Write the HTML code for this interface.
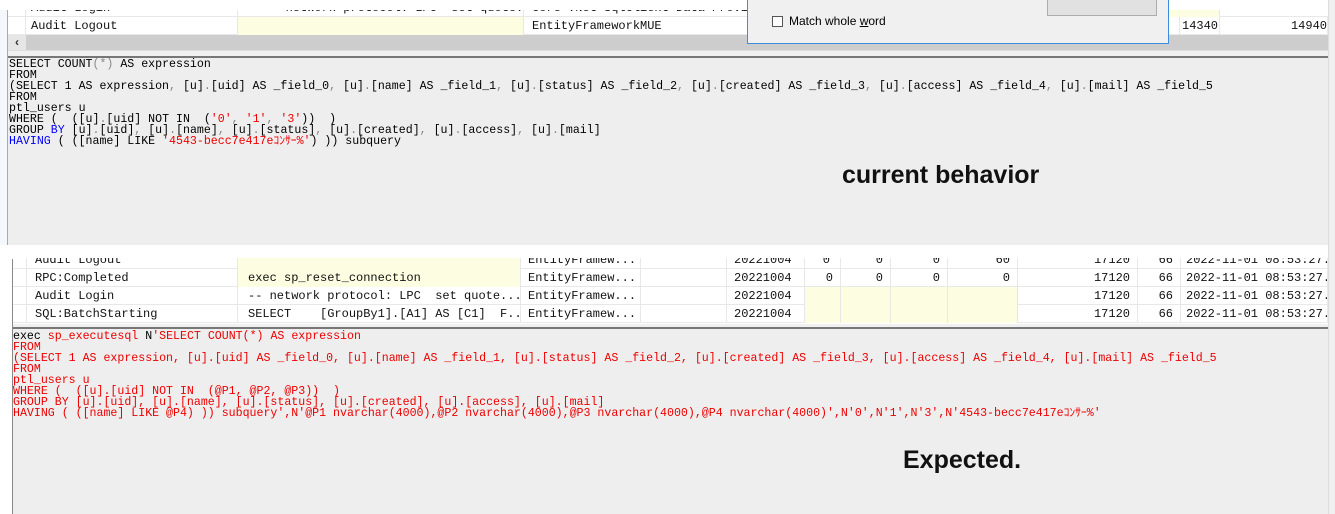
<!DOCTYPE html>
<html><head><meta charset="utf-8"><style>
*{margin:0;padding:0;box-sizing:border-box}
body{width:1335px;height:514px;overflow:hidden;background:#fff;position:relative;font-family:"Liberation Mono","Noto Sans CJK JP",monospace}
.a{position:absolute}
.mono{font-family:"Liberation Mono","Noto Sans CJK JP",monospace;font-size:11.6px;line-height:11px;white-space:pre}
.row{position:absolute;height:18px;border-bottom:1px solid #e8e8e8;font-size:12px;line-height:18px;white-space:pre;color:#111}
.cell{position:absolute;top:0;height:18px;border-right:1px solid #e8e8e8;overflow:hidden}
.y{background:#fdfde2}
.k{color:#00f}.r{color:#e00}.g{color:#888}
.big{font-family:"Liberation Sans",sans-serif;font-weight:bold;font-size:25px;color:#111}
</style></head><body>
<!-- top panel -->
<div class="a" style="left:0;top:10px;width:8px;height:236px;background:#f4f7fb"></div>
<div class="a" style="left:7px;top:10px;width:1px;height:236px;background:#aaa"></div>
<div class="row" style="left:8px;top:-1px;width:1320px;height:18px"><div class="cell" style="left:0;width:18px"></div><div class="cell" style="left:18px;width:212px;padding-left:5px">Audit Login</div><div class="cell" style="left:230px;width:286px;padding-left:26px">-- network protocol: LPC  set quote...</div><div class="cell" style="left:516px;width:400px;padding-left:8px">Core .Net SqlClient Data Provider</div><div class="cell y" style="left:1160px;width:52px"></div></div>
<div class="a" style="left:0;top:0;width:1335px;height:10px;background:#fff"></div>
<div class="row" style="left:8px;top:17px;width:1320px"><div class="cell" style="left:0;width:18px"></div><div class="cell" style="left:18px;width:212px;padding-left:5px">Audit Logout</div><div class="cell y" style="left:230px;width:286px"></div><div class="cell" style="left:516px;width:656px;padding-left:8px">EntityFrameworkMUE</div><div class="cell" style="left:1172px;width:40px;padding-left:2px">14340</div><div class="cell" style="left:1212px;width:108px;text-align:right">14940</div></div>
<div class="a" style="left:8px;top:35px;width:1320px;height:15px;background:#cdcdcd"></div>
<div class="a" style="left:8px;top:35px;width:18px;height:15px;background:#e6e6e6;font:bold 12px 'Liberation Sans';line-height:15px;text-align:center;color:#333">&lsaquo;</div>
<div class="a" style="left:8px;top:50px;width:1320px;height:7px;background:#f0f0f0;border-top:1px solid #ddd"></div>
<div class="a" style="left:8px;top:56px;width:1320px;height:2px;background:#777"></div>
<div class="a" style="left:8px;top:58px;width:1320px;height:187px;background:#eeeeee"></div>
<div class="a mono" style="left:9px;top:59px;color:#000">SELECT COUNT<span class="g">(*)</span> AS expression
FROM
(SELECT 1 AS expression<span class="g">,</span> [u]<span class="g">.</span>[uid] AS _field_0<span class="g">,</span> [u]<span class="g">.</span>[name] AS _field_1<span class="g">,</span> [u]<span class="g">.</span>[status] AS _field_2<span class="g">,</span> [u]<span class="g">.</span>[created] AS _field_3<span class="g">,</span> [u]<span class="g">.</span>[access] AS _field_4<span class="g">,</span> [u]<span class="g">.</span>[mail] AS _field_5
FROM
ptl_users u
WHERE (  ([u]<span class="g">.</span>[uid] NOT IN  (<span class="r">'0'</span><span class="g">,</span> <span class="r">'1'</span><span class="g">,</span> <span class="r">'3'</span>))  )
GROUP <span class="k">BY</span> [u]<span class="g">.</span>[uid]<span class="g">,</span> [u]<span class="g">.</span>[name]<span class="g">,</span> [u]<span class="g">.</span>[status]<span class="g">,</span> [u]<span class="g">.</span>[created]<span class="g">,</span> [u]<span class="g">.</span>[access]<span class="g">,</span> [u]<span class="g">.</span>[mail]
<span class="k">HAVING</span> ( ([name] LIKE <span class="r">'4543-becc7e417eｺﾝｻｰ%'</span>) )) subquery</div>
<div class="a big" style="left:842px;top:161px">current behavior</div>
<!-- dialog -->
<div class="a" style="left:747px;top:0;width:422px;height:44px;background:#f0f0f0;border:1px solid #3b8de0;border-top:none"></div>
<div class="a" style="left:1047px;top:0;width:110px;height:16px;background:#e1e1e1;border:1px solid #adadad;border-top:none"></div>
<div class="a" style="left:772px;top:16px;width:11px;height:11px;background:#fff;border:1px solid #555"></div>
<div class="a" style="left:789px;top:14px;font:12px 'Liberation Sans',sans-serif;color:#000">Match whole <u>w</u>ord</div>
<!-- right strip -->
<div class="a" style="left:1328px;top:0;width:7px;height:514px;background:#f0f0f0;border-left:1px solid #ddd"></div>
<!-- lower panel -->
<div class="a" style="left:12px;top:259px;width:1px;height:255px;background:#888"></div>
<div class="a" style="left:13px;top:259px;width:1315px;height:68px;background:#fff"></div>
<div class="row" style="left:13px;top:251px;width:1315px"><div class="cell" style="left:0;width:14px"></div><div class="cell" style="left:14px;width:211px;padding-left:8px">Audit Logout</div><div class="cell y" style="left:225px;width:283px"></div><div class="cell" style="left:508px;width:120px;padding-left:7px">EntityFramew...</div><div class="cell" style="left:628px;width:86px"></div><div class="cell" style="left:714px;width:78px;padding-left:7px">20221004</div><div class="cell" style="left:792px;width:36px;text-align:right;padding-right:10px">0</div><div class="cell" style="left:828px;width:50px;text-align:right;padding-right:7px">0</div><div class="cell" style="left:878px;width:57px;text-align:right;padding-right:7px">0</div><div class="cell" style="left:935px;width:70px;text-align:right;padding-right:7px">60</div><div class="cell" style="left:1005px;width:120px;text-align:right;padding-right:7px">17120</div><div class="cell" style="left:1125px;width:43px;text-align:right;padding-right:7px">66</div><div class="cell" style="left:1168px;width:147px;padding-left:5px">2022-11-01 08:53:27.</div></div>
<div class="a" style="left:0;top:245px;width:1328px;height:13px;background:#fff"></div>
<div class="row" style="left:13px;top:269px;width:1315px"><div class="cell" style="left:0;width:14px"></div><div class="cell" style="left:14px;width:211px;padding-left:8px">RPC:Completed</div><div class="cell y" style="left:225px;width:283px;padding-left:10px">exec sp_reset_connection</div><div class="cell" style="left:508px;width:120px;padding-left:7px">EntityFramew...</div><div class="cell" style="left:628px;width:86px"></div><div class="cell" style="left:714px;width:78px;padding-left:7px">20221004</div><div class="cell" style="left:792px;width:36px;text-align:right;padding-right:7px">0</div><div class="cell" style="left:828px;width:50px;text-align:right;padding-right:7px">0</div><div class="cell" style="left:878px;width:57px;text-align:right;padding-right:7px">0</div><div class="cell" style="left:935px;width:70px;text-align:right;padding-right:7px">0</div><div class="cell" style="left:1005px;width:120px;text-align:right;padding-right:7px">17120</div><div class="cell" style="left:1125px;width:43px;text-align:right;padding-right:7px">66</div><div class="cell" style="left:1168px;width:147px;padding-left:5px">2022-11-01 08:53:27.</div></div>
<div class="row" style="left:13px;top:287px;width:1315px"><div class="cell" style="left:0;width:14px"></div><div class="cell" style="left:14px;width:211px;padding-left:8px">Audit Login</div><div class="cell" style="left:225px;width:283px;padding-left:10px">-- network protocol: LPC  set quote...</div><div class="cell" style="left:508px;width:120px;padding-left:7px">EntityFramew...</div><div class="cell" style="left:628px;width:86px"></div><div class="cell" style="left:714px;width:78px;padding-left:7px">20221004</div><div class="cell y" style="left:792px;width:36px"></div><div class="cell y" style="left:828px;width:50px"></div><div class="cell y" style="left:878px;width:57px"></div><div class="cell y" style="left:935px;width:70px"></div><div class="cell" style="left:1005px;width:120px;text-align:right;padding-right:7px">17120</div><div class="cell" style="left:1125px;width:43px;text-align:right;padding-right:7px">66</div><div class="cell" style="left:1168px;width:147px;padding-left:5px">2022-11-01 08:53:27.</div></div>
<div class="row" style="left:13px;top:305px;width:1315px"><div class="cell" style="left:0;width:14px"></div><div class="cell" style="left:14px;width:211px;padding-left:8px">SQL:BatchStarting</div><div class="cell" style="left:225px;width:283px;padding-left:10px">SELECT    [GroupBy1].[A1] AS [C1]  F...</div><div class="cell" style="left:508px;width:120px;padding-left:7px">EntityFramew...</div><div class="cell" style="left:628px;width:86px"></div><div class="cell" style="left:714px;width:78px;padding-left:7px">20221004</div><div class="cell y" style="left:792px;width:36px"></div><div class="cell y" style="left:828px;width:50px"></div><div class="cell y" style="left:878px;width:57px"></div><div class="cell y" style="left:935px;width:70px"></div><div class="cell" style="left:1005px;width:120px;text-align:right;padding-right:7px">17120</div><div class="cell" style="left:1125px;width:43px;text-align:right;padding-right:7px">66</div><div class="cell" style="left:1168px;width:147px;padding-left:5px">2022-11-01 08:53:27.</div></div>
<div class="a" style="left:13px;top:324px;width:1315px;height:3px;background:#f0f0f0"></div>
<div class="a" style="left:13px;top:327px;width:1315px;height:2px;background:#777"></div>
<div class="a" style="left:13px;top:329px;width:1315px;height:185px;background:#eeeeee"></div>
<div class="a mono r" style="left:13px;top:331px"><span style="color:#000">exec</span> sp_executesql <span style="color:#000">N</span>'SELECT COUNT(*) AS expression
FROM
(SELECT 1 AS expression, [u].[uid] AS _field_0, [u].[name] AS _field_1, [u].[status] AS _field_2, [u].[created] AS _field_3, [u].[access] AS _field_4, [u].[mail] AS _field_5
FROM
ptl_users u
WHERE (  ([u].[uid] NOT IN  (@P1, @P2, @P3))  )
GROUP BY [u].[uid], [u].[name], [u].[status], [u].[created], [u].[access], [u].[mail]
HAVING ( ([name] LIKE @P4) )) subquery',N'@P1 nvarchar(4000),@P2 nvarchar(4000),@P3 nvarchar(4000),@P4 nvarchar(4000)',N'0',N'1',N'3',N'4543-becc7e417eｺﾝｻｰ%'</div>
<div class="a big" style="left:903px;top:446px">Expected.</div>
</body></html>
